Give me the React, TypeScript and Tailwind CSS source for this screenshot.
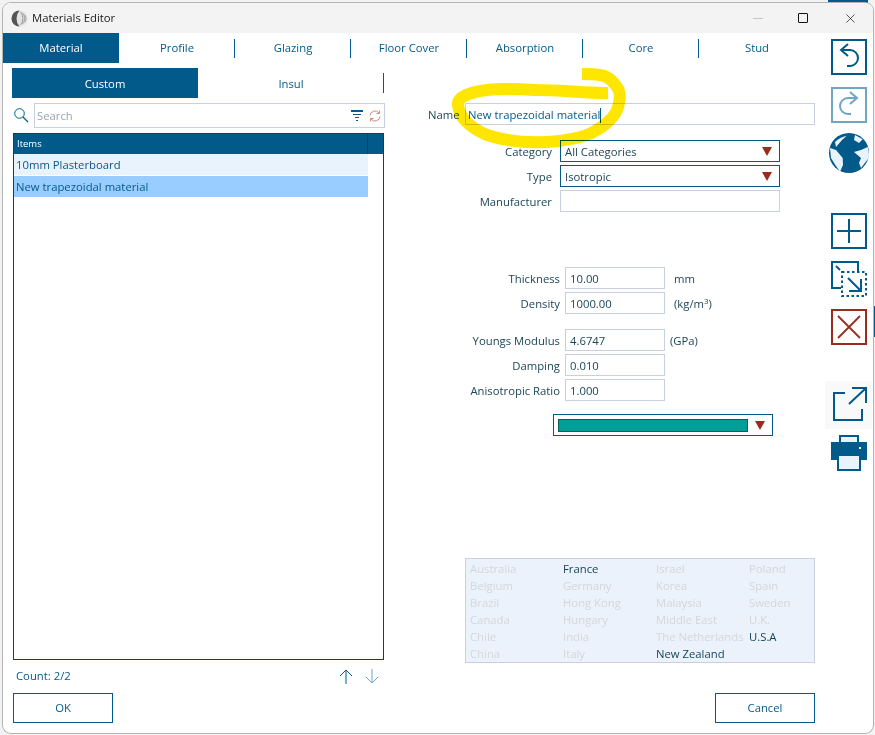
import React from 'react';
import { X } from 'lucide-react';

const tabs = ['Material', 'Profile', 'Glazing', 'Floor Cover', 'Absorption', 'Core', 'Stud'];

const countries = [
  ['Australia', 'France', 'Israel', 'Poland'],
  ['Belgium', 'Germany', 'Korea', 'Spain'],
  ['Brazil', 'Hong Kong', 'Malaysia', 'Sweden'],
  ['Canada', 'Hungary', 'Middle East', 'U.K.'],
  ['Chile', 'India', 'The Netherlands', 'U.S.A'],
  ['China', 'Italy', 'New Zealand', ''],
];
const activeCountries = ['France', 'U.S.A', 'New Zealand'];

function Caret() {
  return (
    <svg width="12" height="11" viewBox="0 0 12 11" className="shrink-0">
      <polygon points="1,1 11,1 6,10" fill="#9a2c1e" />
    </svg>
  );
}

function Field({ label, value, unit, unitClass }: { label: string; value: string; unit?: React.ReactNode; unitClass?: string }) {
  return (
    <div className="flex items-center h-[22px]">
      <span className="w-[125px] text-right text-[#1d4656] whitespace-nowrap pt-[2px]">{label}</span>
      <div className="ml-[5px] w-[100px] h-[22px] border border-[#c8d0e0] pl-[4px] pt-px leading-[20px] text-[#1d4656]">{value}</div>
      {unit && <span className={`text-[#1d4656] whitespace-nowrap pt-[2px] ${unitClass}`}>{unit}</span>}
    </div>
  );
}

function SelectRow({ label, value }: { label: string; value: string }) {
  return (
    <div className="flex items-center h-[22px]">
      <span className="w-[87px] text-right text-[#1d4656] pt-[2px]">{label}</span>
      <div className="ml-[8px] w-[220px] h-[22px] border border-[#025a8b] pl-[4px] pr-[6px] flex items-center justify-between text-[#1d4656]">
        <span className="pt-[2px]">{value}</span>
        <Caret />
      </div>
    </div>
  );
}

function ToolBox({ color, children }: { color: string; children: React.ReactNode }) {
  return (
    <svg width="36" height="36" viewBox="0 0 36 36" fill="none" className="block">
      <rect x="1" y="1" width="34" height="34" stroke={color} strokeWidth="2" />
      {children}
    </svg>
  );
}

export default function App() {
  return (
    <div className="relative w-[875px] h-[735px] bg-[#f2f2f2] overflow-hidden pl-[3px] pt-[3px]" style={{ fontFamily: '"Open Sans", "Noto Sans", sans-serif' }}>
      {/* bits of the app behind the dialog */}
      <div className="absolute left-[828px] top-0 w-[40px] h-[3px] bg-[#025a8b]" />
      <div className="absolute left-[874px] top-[306px] w-[1px] h-[31px] bg-[#025a8b]" />

      <div className="relative w-[870px] h-[730px] bg-white rounded-lg overflow-hidden text-[11.3px] flex flex-col shadow-[0_0_0_1px_#b4b4b4]">
        {/* title bar */}
        <div className="h-[30px] bg-[#f3f3f3] flex items-center shrink-0">
          <svg width="17" height="17" viewBox="0 0 18 18" className="ml-[8px]">
            <circle cx="9" cy="9" r="8.500" fill="#e4e4e4" />
            <path d="M9 .5a8.500 8.500 0 0 0 0 17a13 13 0 0 1 0-17z" fill="#555" />
            <path d="M10 2a11 11 0 0 1 0 14M12 3a9 9 0 0 1 0 12M14.500 5a6.500 6.500 0 0 1 0 8" stroke="#8a8a8a" strokeWidth="0.8" fill="none" />
          </svg>
          <span className="ml-[4px] text-[#1a1a1a]">Materials Editor</span>
          <div className="ml-auto flex items-center">
            <span className="w-[10px] h-px bg-[#c8c8c8] mr-[35px]" />
            <span className="w-[10px] h-[10px] border border-[#111] rounded-[1px] mr-[35px]" />
            <X size={15} strokeWidth={1.1} className="text-[#111] mr-[15px]" />
          </div>
        </div>

        <div className="flex flex-1 min-h-0">
          <div className="w-[812px] shrink-0 flex flex-col">
            {/* main tabs */}
            <div className="h-[30px] flex shrink-0">
              {tabs.map((t, i) => (
                <div
                  key={t}
                  className={`w-[116px] flex items-center justify-center relative ${i === 0 ? 'bg-[#025a8b] text-white' : 'text-[#025a8b]'}`}
                >
                  {t}
                  {i > 0 && i < 6 && <span className="absolute right-0 top-[6px] h-[19px] w-px bg-[#025a8b]" />}
                </div>
              ))}
            </div>

            <div className="flex flex-1 min-h-0">
              {/* left column */}
              <div className="w-[383px] shrink-0 pt-[5px] pl-[9px] flex flex-col">
                <div className="flex h-[30px]">
                  <div className="w-[186px] bg-[#025a8b] text-white flex items-center justify-center pt-[2px]">Custom</div>
                  <div className="w-[186px] text-[#025a8b] flex items-center justify-center relative pt-[2px]">
                    Insul
                    <span className="absolute right-0 top-[5px] h-[20px] w-px bg-[#025a8b]" />
                  </div>
                </div>
                <div className="flex items-center mt-[5px] h-[25px]">
                  <svg width="15" height="15" viewBox="0 0 15 15" fill="none" stroke="#025a8b" className="ml-[2px] shrink-0">
                    <circle cx="5.500" cy="5.500" r="4.800" />
                    <path d="M9 9l5 5" strokeWidth="1.300" />
                  </svg>
                  <div className="ml-[5px] w-[351px] h-[25px] border border-[#c8d0e0] flex items-center pl-[2px] pr-[3px] shrink-0">
                    <span className="text-[#9aa4ac] pt-px">Search</span>
                    <svg width="12" height="11" viewBox="0 0 12 11" className="ml-auto" fill="none" stroke="#025a8b">
                      <path d="M0 1h12" strokeWidth="2" />
                      <path d="M2 4.500h8M4 7.500h4M5 10.500h2" />
                    </svg>
                    <svg width="12" height="12" viewBox="0 0 12 12" className="ml-[6px]" fill="none" stroke="#d08a80">
                      <path d="M1 5.500a5 5 0 0 1 9-2.500M11 6.500a5 5 0 0 1-9 2.500M10.500 .5v3h-3M1.500 11.500v-3h3" />
                    </svg>
                  </div>
                </div>
                {/* list */}
                <div className="mt-[5px] ml-[1px] w-[371px] h-[527px] border border-[#123f52] flex flex-col">
                  <div className="h-[20px] bg-[#025a8b] flex shrink-0 text-[9.500px] text-white">
                    <div className="w-[354px] pl-[3px] leading-[20px] border-r border-[#123f52]">Items</div>
                  </div>
                  <div className="w-[354px] h-[21px] bg-[#e9f3fd] text-[#025a8b] pl-[2px] leading-[21px]">10mm Plasterboard</div>
                  <div className="w-[354px] h-[21px] mt-px bg-[#99cdff] text-[#025a8b] pl-[2px] leading-[21px]">New trapezoidal material</div>
                </div>
                <div className="flex items-center h-[22px] mt-[5px] ml-[4px] text-[#025a8b]">
                  <span>Count: 2/2</span>
                  <svg width="14" height="15" viewBox="0 0 14 15" fill="none" stroke="#025a8b" className="ml-auto mr-[12px]">
                    <path d="M7 1v14M1 7l6-6 6 6" />
                  </svg>
                  <svg width="14" height="15" viewBox="0 0 14 15" fill="none" stroke="#6da3c2" className="mr-[7px]">
                    <path d="M7 0v14M1 8l6 6 6-6" />
                  </svg>
                </div>
                <div className="mt-[6px] ml-[1px] w-[100px] h-[30px] border border-[#025a8b] flex items-center justify-center text-[#025a8b]">OK</div>
              </div>

              {/* form column */}
              <div className="flex-1 pt-[40px] flex flex-col">
                <div className="flex items-center h-[22px] ml-[42px]">
                  <span className="w-[32px] text-[#1d4656] pt-[2px]">Name</span>
                  <div className="ml-[5px] w-[350px] h-[22px] border border-[#c8d0e0] pl-[2px] pt-[2px] text-[#025a8b] flex items-center shrink-0">
                    New trapezoidal material<span className="w-px h-[15px] bg-[#025a8b]" />
                  </div>
                </div>
                <div className="mt-[15px] ml-[79px] flex flex-col gap-[3px]">
                  <SelectRow label="Category" value="All Categories" />
                  <SelectRow label="Type" value="Isotropic" />
                  <div className="flex items-center h-[22px]">
                    <span className="w-[87px] text-right text-[#1d4656] pt-[2px]">Manufacturer</span>
                    <div className="ml-[8px] w-[220px] h-[22px] border border-[#c8d0e0]" />
                  </div>
                </div>
                <div className="mt-[55px] ml-[49px] flex flex-col gap-[3px]">
                  <Field label="Thickness" value="10.00" unit="mm" unitClass="ml-[9px]" />
                  <Field label="Density" value="1000.00" unit={<>(kg/m<sup className="text-[8px]">3</sup>)</>} unitClass="ml-[9px]" />
                  <div className="h-[9px]" />
                  <Field label="Youngs Modulus" value="4.6747" unit="(GPa)" unitClass="ml-[5px]" />
                  <Field label="Damping" value="0.010" />
                  <Field label="Anisotropic Ratio" value="1.000" />
                </div>
                <div className="mt-[13px] ml-[167px] w-[220px] h-[22px] border border-[#025a8b] pl-[4px] pr-[6px] flex items-center justify-between">
                  <div className="w-[190px] h-[13px] bg-[#009e96] border border-[#0b5e5a]" />
                  <Caret />
                </div>
                <div className="mt-[122px] ml-[79px] w-[350px] h-[105px] bg-[#ebf2fb] border border-[#c8d0e0] pl-[4px] pt-px grid grid-cols-[93px_93px_93px_93px] auto-rows-[17px] leading-[17px] shrink-0">
                  {countries.flat().map((c, i) => (
                    <span key={i} className={`whitespace-nowrap ${activeCountries.includes(c) ? 'text-[#123f52]' : 'text-[#d3d7dc]'}`}>{c}</span>
                  ))}
                </div>
                <div className="mt-[30px] ml-[329px] w-[100px] h-[30px] border border-[#025a8b] flex items-center justify-center text-[#025a8b] shrink-0">Cancel</div>
              </div>
            </div>
          </div>

          {/* right tool strip */}
          <div className="flex-1 flex flex-col items-start pl-[16px] pt-[6px]">
            <ToolBox color="#025a8b">
              <path d="M17 5l-7 6 7 6M10 11h9a8 8 0 0 1 0 16h-3" stroke="#025a8b" strokeWidth="2" />
            </ToolBox>
            <div className="mt-[12px]">
              <ToolBox color="#6ea6c4">
                <path d="M19 5l7 6-7 6M26 11h-9a8 8 0 0 0 0 16h3" stroke="#6ea6c4" strokeWidth="2" />
              </ToolBox>
            </div>
            <svg width="40" height="40" viewBox="0 0 40 40" className="mt-[10px] -ml-[2px] shrink-0">
              <circle cx="20" cy="20" r="20" fill="#025a8b" />
              <path d="M6 9Q11 4 17.700 2.700L13 7 7 14ZM1 15L7 17 13.700 25 14 32 11 38.700 6.300 32 2 25ZM26 2L33.700 6.300 30 10 25 7ZM38.700 14Q40.500 20 39.700 25L32 35 30 30 32 25 25 19 32 17Z" fill="#e9f3fd" />
            </svg>
            <div className="mt-[40px]">
              <ToolBox color="#025a8b">
                <path d="M18 6v24M6 18h24" stroke="#025a8b" strokeWidth="2" />
              </ToolBox>
            </div>
            <svg width="36" height="36" viewBox="0 0 36 36" fill="none" className="mt-[12px] shrink-0">
              <path d="M27 10V1H1v26h9" stroke="#025a8b" strokeWidth="2" />
              <rect x="11" y="11" width="24" height="24" stroke="#025a8b" strokeWidth="2" strokeDasharray="2.500 2.500" />
              <path d="M5 5l4 4" stroke="#025a8b" strokeWidth="2" />
              <path d="M17 17l13 13M30 18v12H18" stroke="#025a8b" strokeWidth="2" />
            </svg>
            <div className="mt-[12px]">
              <ToolBox color="#9a2c1e">
                <path d="M7 7l22 22M29 7L7 29" stroke="#9a2c1e" strokeWidth="1.800" />
              </ToolBox>
            </div>
            <div className="mt-[36px] -ml-[6px] w-[47px] h-[48px] bg-[#f9f9f9] pl-[8px] pt-[6px] shrink-0">
              <svg width="34" height="34" viewBox="0 0 34 34" fill="none" stroke="#025a8b" strokeWidth="2" className="block">
                <path d="M12 6H1v27h28V22M16 17L33 1M19 1h14v15" />
              </svg>
            </div>
            <svg width="36" height="36" viewBox="0 0 36 36" className="mt-[6px] shrink-0">
              <path d="M9 8V1h18v7" fill="#e9f3fd" stroke="#025a8b" strokeWidth="2" />
              <path d="M0 7h36v18H0z" fill="#025a8b" />
              <rect x="28" y="12" width="2" height="2" fill="#fff" />
              <rect x="7" y="20" width="22" height="15" fill="#e9f3fd" stroke="#025a8b" strokeWidth="2" />
            </svg>
          </div>
        </div>

        {/* hand-drawn yellow marker ring, over the form */}
        <svg width="875" height="735" viewBox="0 0 875 735" fill="none" className="absolute -left-[3px] -top-[3px] pointer-events-none mix-blend-multiply">
          <path
            d="M608 93C585 93 560 90 537 90C520 89 505 88 487 90C470 92 457 97 458 105C459 114 464 125 487 135C505 141 525 143 547 142C565 141 585 137 593 132C605 126 616 116 618 107C621 97 620 91 617 87C613 81 607 76 600 75C594 74 588 74 582 74"
            stroke="#ffe600"
            strokeWidth="12"
          />
        </svg>
      </div>
    </div>
  );
}
